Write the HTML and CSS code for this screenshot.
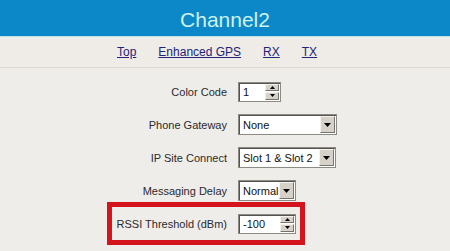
FILE: index.html
```html
<!DOCTYPE html>
<html>
<head>
<meta charset="utf-8">
<link rel="stylesheet" href="styles.css">
</head>
<body>
<header class="header">Channel2</header>
<nav class="nav">
  <a href="#" class="link">Top</a>
  <a href="#" class="link">Enhanced GPS</a>
  <a href="#" class="link">RX</a>
  <a href="#" class="link">TX</a>
</nav>
<main class="form">
  <div class="row">
    <span class="label">Color Code</span>
    <div class="field spin w-cc">
      <span class="val">1</span>
      <div class="spinbtns">
        <span class="sbtn"><svg width="5" height="3" viewBox="0 0 5 3"><path d="M0 3 L2.5 0 L5 3Z" fill="#000"/></svg></span>
        <span class="sbtn"><svg width="5" height="3" viewBox="0 0 5 3"><path d="M0 0 L2.5 3 L5 0Z" fill="#000"/></svg></span>
      </div>
    </div>
  </div>
  <div class="row">
    <span class="label">Phone Gateway</span>
    <div class="field sel w-pg">
      <span class="val">None</span>
      <span class="dbtn"><svg width="7" height="4" viewBox="0 0 7 4"><path d="M0 0 L3.5 4 L7 0Z" fill="#000"/></svg></span>
    </div>
  </div>
  <div class="row">
    <span class="label">IP Site Connect</span>
    <div class="field sel w-ip">
      <span class="val">Slot 1 &amp; Slot 2</span>
      <span class="dbtn"><svg width="7" height="4" viewBox="0 0 7 4"><path d="M0 0 L3.5 4 L7 0Z" fill="#000"/></svg></span>
    </div>
  </div>
  <div class="row">
    <span class="label">Messaging Delay</span>
    <div class="field sel w-md">
      <span class="val">Normal</span>
      <span class="dbtn"><svg width="7" height="4" viewBox="0 0 7 4"><path d="M0 0 L3.5 4 L7 0Z" fill="#000"/></svg></span>
    </div>
  </div>
  <div class="row highlight">
    <span class="label">RSSI Threshold (dBm)</span>
    <div class="field spin w-rs">
      <span class="val">-100</span>
      <div class="spinbtns">
        <span class="sbtn"><svg width="5" height="3" viewBox="0 0 5 3"><path d="M0 3 L2.5 0 L5 3Z" fill="#000"/></svg></span>
        <span class="sbtn"><svg width="5" height="3" viewBox="0 0 5 3"><path d="M0 0 L2.5 3 L5 0Z" fill="#000"/></svg></span>
      </div>
    </div>
  </div>
</main>
</body>
</html>
```
FILE: styles.css
```css
html, body {
  margin: 0;
  padding: 0;
}
body {
  width: 450px;
  height: 251px;
  overflow: hidden;
  background: #efedea;
  font-family: "Liberation Sans", Arial, sans-serif;
}
.header {
  height: 36px;
  background: #0c88c9;
  color: #cdf3f0;
  font-size: 21px;
  line-height: 40px;
  text-align: center;
  border-bottom: 1px solid #bfe3ea;
}
.nav {
  height: 30px;
  background: #efebe7;
  border-bottom: 1px solid #dcd8d3;
  display: flex;
  align-items: center;
  padding-left: 117px;
  gap: 22px;
  box-sizing: content-box;
}
.link {
  font-size: 12px;
  color: #22237a;
  text-decoration: underline;
}
.form {
  padding-top: 7px;
  padding-left: 112px;
}
.row {
  display: flex;
  align-items: center;
  height: 33px;
  width: 188px;
}
.highlight {
  outline: 5px solid #d3141d;
}
.label {
  flex: none;
  width: 115px;
  text-align: right;
  margin-right: 11px;
  font-size: 11px;
  color: #2a2a2a;
  white-space: nowrap;
}
.field {
  flex: none;
  box-sizing: border-box;
  display: flex;
  align-items: center;
  background: #fff;
  border: 1px solid #8d8a84;
  box-shadow: inset 1px 1px 0 #55534f;
  font-size: 11px;
  color: #111;
}
.val {
  padding-left: 4px;
  flex: 1;
  white-space: nowrap;
  overflow: hidden;
}
.spin {
  height: 20px;
}
.sel {
  height: 21px;
}
.w-cc { width: 43px; }
.w-pg { width: 99px; }
.w-ip { width: 98px; }
.w-md { width: 58px; }
.w-rs { width: 58px; }
.spinbtns {
  display: flex;
  flex-direction: column;
  gap: 1px;
  padding: 1px;
  height: 100%;
  box-sizing: border-box;
}
.sbtn {
  width: 14px;
  flex: 1;
  background: #d6d2ca;
  border: 1px solid;
  border-color: #f4f2ee #77746e #77746e #f4f2ee;
  box-sizing: border-box;
  display: flex;
  align-items: center;
  justify-content: center;
}
.dbtn {
  flex: none;
  width: 15px;
  height: 17px;
  margin-right: 1px;
  background: #d6d2ca;
  border: 1px solid;
  border-color: #f4f2ee #77746e #77746e #f4f2ee;
  box-sizing: border-box;
  display: flex;
  align-items: center;
  justify-content: center;
}
```
